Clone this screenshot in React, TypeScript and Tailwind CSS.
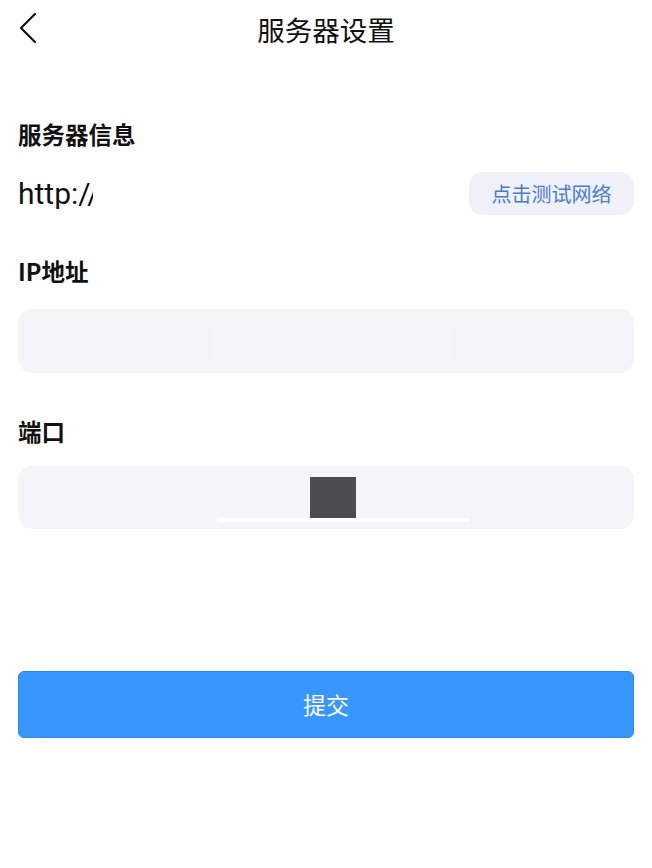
import React from 'react';

const font = { fontFamily: '"Noto Sans CJK SC", "Noto Sans", sans-serif' };

export default function App() {
  return (
    <div className="min-h-[868px] w-full bg-white text-black" style={font}>
      {/* Header */}
      <div className="relative flex h-[60px] items-center justify-center">
        <button className="absolute left-[14px] top-[10px] flex h-[36px] w-[28px] items-center justify-center">
          <svg width="20" height="32" viewBox="0 0 20 32" fill="none">
            <path d="M17 2 L3 16 L17 30" stroke="#111" strokeWidth="2.2" strokeLinecap="round" strokeLinejoin="round" />
          </svg>
        </button>
        <h1 className="text-[27.5px] leading-none font-normal text-[#111]">服务器设置</h1>
      </div>

      <div className="px-[18px]">
        {/* Server info */}
        <div className="mt-[60px] flex h-[30px] items-center text-[23.5px] font-bold text-[#111]">服务器信息</div>
        <div className="mt-[22px] flex h-[43px] items-center justify-between">
          <span
            className="block w-[75px] overflow-hidden whitespace-nowrap text-[30px] leading-none text-[#111]"
            style={{ fontFamily: 'Roboto, "Noto Sans", sans-serif' }}
          >
            http://
          </span>
          <button className="flex h-[43px] w-[165px] items-center justify-center rounded-[14px] bg-[#eef1f8] text-[20px] text-[#4a7bcc]">
            点击测试网络
          </button>
        </div>

        {/* IP */}
        <div className="mt-[42px] flex h-[30px] items-center text-[23.5px] font-bold text-[#111]">IP地址</div>
        <div className="mt-[22px] h-[64px] rounded-[14px] bg-[#f4f5f9] pl-[197px] pt-[18px]">
          <div className="h-[33px] w-[235px] bg-[#f6f7fa]" />
        </div>

        {/* Port */}
        <div className="mt-[44px] flex h-[30px] items-center text-[23.5px] font-bold text-[#111]">端口</div>
        <div className="mt-[19px] h-[63px] rounded-[14px] bg-[#f4f5f9] pl-[199px] pt-[11px]">
          <div className="flex w-[253px] flex-col">
            <div className="ml-[93px] h-[41px] w-[46px] bg-[#4b4c50]" />
            <div className="h-[4px] w-[253px] bg-white" />
          </div>
        </div>

        {/* Submit */}
        <button className="mt-[142px] flex h-[67px] w-full items-center justify-center rounded-[6px] border border-[#2f86e8] bg-[#3797ff] text-[23px] text-white">
          提交
        </button>
      </div>
    </div>
  );
}
